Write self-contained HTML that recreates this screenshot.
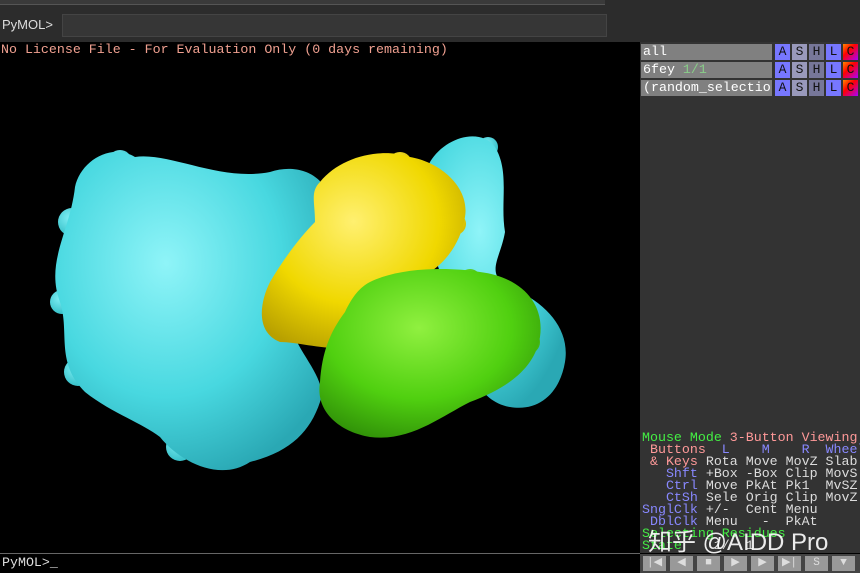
<!DOCTYPE html>
<html><head><meta charset="utf-8"><style>
body{margin:0;width:860px;height:573px;background:#000;overflow:hidden;position:relative;font-family:"Liberation Mono",monospace}
.top{position:absolute;left:0;top:0;width:860px;height:42px;background:#2c2c2c}
.top .bar1{position:absolute;left:0;top:0;width:605px;height:4px;background:#3a3a3a;border-bottom:1px solid #555}
.top .lbl{position:absolute;left:2px;top:17px;color:#ddd;font:13px "Liberation Sans",sans-serif}
.top .inp{position:absolute;left:62px;top:14px;width:543px;height:21px;background:#363636;border:1px solid #444}
.panel{position:absolute;left:640px;top:42px;width:220px;height:511px;background:#333}
.row{position:absolute;left:641px;height:16px;width:219px}
.row .n{position:absolute;left:0;top:0;width:131px;height:16px;background:#808080;color:#fff;font-size:13.3px;line-height:16px;padding-left:2px;box-sizing:border-box;white-space:nowrap;overflow:hidden}
.b{position:absolute;top:0;width:15px;height:16px;font-size:13px;line-height:16px;text-align:center;color:#111}
.txt{position:absolute;font-size:13.3px;line-height:12px;white-space:pre}
.bot{position:absolute;left:640px;top:554px;width:220px;height:19px;background:#444}
.bb{position:absolute;top:556px;width:23px;height:15px;background:#999;color:#ddd;font-size:11px;text-align:center;line-height:15px}
</style></head><body>
<div class="top"><div class="bar1"></div><div class="lbl">PyMOL&gt;</div><div class="inp"></div></div>
<div class="txt" style="left:1px;top:44px;color:#f0a090">No License File - For Evaluation Only (0 days remaining)</div>
<svg style="position:absolute;left:0;top:42px" width="640" height="511">
<defs>
<radialGradient id="c" cx="40%" cy="35%" r="70%"><stop offset="0" stop-color="#8ff4f8"/><stop offset=".6" stop-color="#48d8e0"/><stop offset="1" stop-color="#2aa8b4"/></radialGradient>
<radialGradient id="y" cx="45%" cy="35%" r="70%"><stop offset="0" stop-color="#fff070"/><stop offset=".6" stop-color="#f0d800"/><stop offset="1" stop-color="#b8a000"/></radialGradient>
<radialGradient id="g" cx="45%" cy="35%" r="70%"><stop offset="0" stop-color="#90f040"/><stop offset=".6" stop-color="#50d010"/><stop offset="1" stop-color="#309008"/></radialGradient>
<radialGradient id="cb" cx="40%" cy="35%" r="60%"><stop offset="0" stop-color="#7eeef4"/><stop offset="1" stop-color="#3cc4cc"/></radialGradient>
<radialGradient id="yb" cx="40%" cy="35%" r="60%"><stop offset="0" stop-color="#fbe840"/><stop offset="1" stop-color="#d8c000"/></radialGradient>
<radialGradient id="gb" cx="40%" cy="35%" r="60%"><stop offset="0" stop-color="#7ae830"/><stop offset="1" stop-color="#44b810"/></radialGradient>
</defs>
<g fill="url(#cb)"><circle cx="120" cy="120" r="12"/><circle cx="72" cy="180" r="14"/><circle cx="62" cy="260" r="12"/><circle cx="78" cy="330" r="14"/><circle cx="180" cy="405" r="14"/><circle cx="230" cy="410" r="12"/><circle cx="300" cy="143" r="14"/><circle cx="488" cy="105" r="10"/><circle cx="552" cy="320" r="12"/></g>
<path fill="url(#c)" d="M75,145 C80,120 110,100 135,115 C170,110 220,140 270,130 C300,120 330,135 330,165 C340,200 300,230 290,260 C280,300 330,330 320,360 C310,390 290,410 250,420 C220,440 180,420 160,395 C140,380 110,370 85,350 C55,320 70,290 60,260 C45,220 70,190 75,145Z"/>
<path fill="url(#c)" d="M430,120 C445,95 480,85 495,105 C510,130 500,160 505,190 C500,220 480,235 520,250 C550,265 570,290 565,320 C560,350 540,370 510,365 C480,360 470,330 460,300 C450,260 440,230 430,200 C420,170 420,140 430,120Z"/>
<g fill="url(#yb)"><circle cx="400" cy="122" r="12"/><circle cx="455" cy="182" r="11"/><circle cx="276" cy="275" r="13"/></g>
<path fill="url(#y)" d="M320,140 C340,115 380,105 410,115 C440,120 470,145 465,175 C460,205 440,230 410,240 C380,260 370,290 360,305 C330,310 300,300 280,300 C255,290 260,260 270,240 C285,215 300,195 315,180 C315,160 310,150 320,140Z"/>
<g fill="url(#gb)"><circle cx="528" cy="300" r="12"/><circle cx="342" cy="368" r="13"/><circle cx="470" cy="238" r="11"/></g>
<path fill="url(#g)" d="M370,240 C400,225 450,225 480,230 C520,235 545,260 540,295 C535,325 510,345 470,360 C440,375 410,400 370,395 C340,390 315,370 320,340 C322,310 330,290 345,270 C352,255 360,245 370,240Z"/>
</svg>
<div class="panel"></div>
<div class="row" style="top:44px"><div class="n">all</div></div>
<div class="row" style="top:62px"><div class="n">6fey <span style="color:#8c8">1/1</span></div></div>
<div class="row" style="top:80px"><div class="n">(random_selectio</div></div>
<div class="b" style="left:775px;top:44px;background:#77f">A</div><div class="b" style="left:792px;top:44px;background:#99b">S</div><div class="b" style="left:809px;top:44px;background:#779">H</div><div class="b" style="left:826px;top:44px;background:#77f">L</div><div class="b" style="left:843px;top:44px;background:linear-gradient(135deg,#f80,#f00 40%,#a0f)">C</div>
<div class="b" style="left:775px;top:62px;background:#77f">A</div><div class="b" style="left:792px;top:62px;background:#99b">S</div><div class="b" style="left:809px;top:62px;background:#779">H</div><div class="b" style="left:826px;top:62px;background:#77f">L</div><div class="b" style="left:843px;top:62px;background:linear-gradient(135deg,#f80,#f00 40%,#a0f)">C</div>
<div class="b" style="left:775px;top:80px;background:#77f">A</div><div class="b" style="left:792px;top:80px;background:#99b">S</div><div class="b" style="left:809px;top:80px;background:#779">H</div><div class="b" style="left:826px;top:80px;background:#77f">L</div><div class="b" style="left:843px;top:80px;background:linear-gradient(135deg,#f80,#f00 40%,#a0f)">C</div>
<div class="txt" style="left:642px;top:432px;color:#4e4"><span>Mouse Mode </span><span style="color:#f99">3-Button Viewing</span></div>
<div class="txt" style="left:642px;top:444px;color:#f99"> Buttons  <span style="color:#88f">L    M    R  Wheel</span></div>
<div class="txt" style="left:642px;top:456px;color:#f99"> &amp; Keys <span style="color:#ddd">Rota Move MovZ Slab</span></div>
<div class="txt" style="left:642px;top:468px;color:#88f">   Shft <span style="color:#ddd">+Box -Box Clip MovS</span></div>
<div class="txt" style="left:642px;top:480px;color:#88f">   Ctrl <span style="color:#ddd">Move PkAt Pk1  MvSZ</span></div>
<div class="txt" style="left:642px;top:492px;color:#88f">   CtSh <span style="color:#ddd">Sele Orig Clip MovZ</span></div>
<div class="txt" style="left:642px;top:504px;color:#88f">SnglClk <span style="color:#ddd">+/-  Cent Menu</span></div>
<div class="txt" style="left:642px;top:516px;color:#88f"> DblClk <span style="color:#ddd">Menu   -  PkAt</span></div>
<div class="txt" style="left:642px;top:528px;color:#4e4">Selecting Residues</div>
<div class="txt" style="left:642px;top:540px;color:#4e4">State    <span style="color:#ddd">1/  1</span></div>
<div style="position:absolute;left:648px;top:522px;color:#fff;font:24px 'Liberation Sans','Noto Sans CJK SC',sans-serif;opacity:.9">知乎 @AIDD Pro</div>
<div class="bot"></div>
<div class="bb" style="left:643px">|◀</div><div class="bb" style="left:670px">◀</div><div class="bb" style="left:697px">■</div><div class="bb" style="left:724px">▶</div><div class="bb" style="left:751px">▶</div><div class="bb" style="left:778px">▶|</div><div class="bb" style="left:805px">S</div><div class="bb" style="left:832px">▼</div>
<div style="position:absolute;left:0;top:553px;width:640px;height:1px;background:#666"></div>
<div class="txt" style="left:2px;top:557px;color:#ddd">PyMOL&gt;_</div>
</body></html>
